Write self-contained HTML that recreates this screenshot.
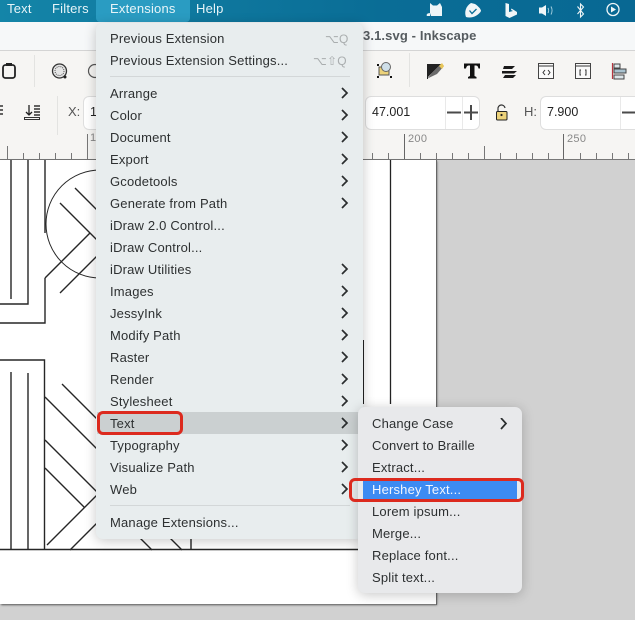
<!DOCTYPE html>
<html><head><meta charset="utf-8">
<style>
*{box-sizing:border-box}
html,body{margin:0;padding:0}
body{width:635px;height:620px;overflow:hidden;position:relative;font-family:"Liberation Sans",sans-serif;background:#d1d1d1}
.a{position:absolute}
#bar{left:0;top:0;width:635px;height:22px;background:linear-gradient(90deg,#1485a8,#0a6d96 60%,#086893)}
.mt{position:absolute;top:0;color:#e6f4f8;font-size:13px;line-height:17px;letter-spacing:.2px;white-space:nowrap}
#title{left:0;top:22px;width:635px;height:29px;background:#f6f8f9;border-bottom:1px solid #d4d4d4}
#tool{left:0;top:51px;width:635px;height:109px;background:#f6f5f3}
#ruler{left:0;top:133px;width:635px;height:27px;background:#f6f5f3;border-bottom:1px solid #777}
#canvas{left:0;top:160px;width:436px;height:444px;background:#fff;box-shadow:1px 1px 2px #555}
.menu{position:absolute;background:#e8edee;border-radius:7px;box-shadow:0 2px 12px rgba(0,0,0,.22)}
.it{position:absolute;color:#2d3031;font-size:13px;line-height:16px;letter-spacing:.18px;white-space:nowrap;margin-top:1px}
.sep{position:absolute;height:1px;background:#d3d7d8}
.box{position:absolute;background:#fff;border:1px solid #dedede;border-radius:6px;height:34px;top:96px;font-size:12.500px;color:#222;line-height:31px;padding-left:6px}
</style></head><body>
<div class="a" id="bar"></div>
<div class="a" style="left:96px;top:0;width:94px;height:22px;background:#2a9cc2;border-radius:0 0 4px 4px"></div>
<div class="mt" style="left:7px">Text</div>
<div class="mt" style="left:52px">Filters</div>
<div class="mt" style="left:110px">Extensions</div>
<div class="mt" style="left:196px">Help</div>
<svg class="a" style="left:420px;top:0" width="215" height="22" viewBox="0 0 215 22">
<path d="M10 16V3l3 2.500h4L20 3l2 4V16ZM10 13c-3 0-4 2-3 3h4Z" fill="#eef5f7"/>
<path d="M46 17c-2-5 0-11 5-14l4 1c3 2 6 5 6 7-2 4-9 8-15 6Z" fill="#f1f6f8"/><path d="M49.500 10.500l2.500 3 4.500-4.500" stroke="#0a6d96" stroke-width="1.300" fill="none"/>
<path d="M85.500 3l3.500 1v8l4-1-2-1 .5-1.500L97 12v2.500l-7.500 3.500-4-2Z" fill="#f1f6f8"/>
<path d="M119 7.500h3l4-2.500v11l-4-2.500h-3Z" fill="#f1f6f8"/><path d="M128 8c1 2 1 3 0 5M131 6.500c1.500 3 1.500 5 0 8" stroke="#a5d0df" fill="none"/>
<path d="M157.500 6.500l6 7.500-3 3V4l3 3-6 7" stroke="#eef5f7" stroke-width="1.100" fill="none"/>
<circle cx="193" cy="9.500" r="6" fill="none" stroke="#eef5f7" stroke-width="1.300"/><path d="M191 6.500l5 3-5 3Z" fill="#eef5f7"/>
</svg>

<div class="a" id="title"></div>
<div class="a" style="left:363px;top:28px;font-size:13px;font-weight:700;color:#555b5f;line-height:16px;letter-spacing:.12px">3.1.svg - Inkscape</div>

<div class="a" id="tool"></div>
<div class="a" id="ruler"></div>
<svg class="a" style="left:0;top:51px" width="635" height="109" viewBox="0 51 635 109">
<path d="M34.500 55V87M57.500 96V135" stroke="#e3e3e1" fill="none"/>
<path d="M409.500 53V87" stroke="#e3e3e1" fill="none"/>
<rect x="3" y="65" width="12" height="13" rx="2.500" fill="none" stroke="#222" stroke-width="1.800"/><rect x="6" y="63" width="6" height="3" fill="#222"/>
<circle cx="59.500" cy="71" r="7" fill="#e6e6e6" stroke="#333" stroke-width="1.300"/><circle cx="59.500" cy="71" r="4.500" fill="none" stroke="#555" stroke-dasharray="1 1"/><circle cx="65" cy="77" r="1.500" fill="#222"/>
<circle cx="95" cy="71" r="6.500" fill="none" stroke="#555" stroke-width="1.200"/>
<path d="M0 106h3M0 110h3M0 114h3" stroke="#333" stroke-width="1.500"/>
<path d="M29 105v10M26 112l3 3 3-3" stroke="#222" stroke-width="1.300" fill="none"/><path d="M34 106h6M34 109h6M34 112h6M34 115h6" stroke="#333" stroke-width="1.500"/><rect x="24.500" y="117.500" width="15" height="2" fill="none" stroke="#333"/>
<rect x="379" y="67" width="10" height="8" fill="#ecd27a" stroke="#555"/><circle cx="386" cy="67" r="4.500" fill="#cfdfe8" stroke="#666"/><path d="M377 64h2v2h-2ZM377 76h2v2h-2ZM390 76h2v2h-2Z" fill="#111"/>
<path d="M427 64h14L427 78Z" fill="#222"/><path d="M427.500 78.500L437 74 444 66l-3-2-9 9Z" fill="#6b6b6b"/><path d="M439 66l3-3 2 3-2 3Z" fill="#e8c659"/><path d="M427 64h1v15h-1Z" fill="#222"/>
<path d="M464 63.500h16v5h-1.500c-.5-2-1-3-3-3h-1v10.500l2 1v1.500h-8.500V77l2-1V65.500h-1c-2 0-2.500 1-3 3H464Z" fill="#111"/>
<path d="M504 66h11l-3 3h-9ZM502 71h15l-3 2.500h-12ZM505 75h11l-3 3h-10Z" fill="#1a1a1a"/>
<rect x="538.500" y="63.500" width="15" height="15" fill="#fafafa" stroke="#444"/><path d="M539 66h14" stroke="#999" stroke-width="2"/><path d="M545 70l-2 2.500 2 2.500M548 70l2 2.500-2 2.500" stroke="#333" fill="none"/>
<rect x="575.500" y="63.500" width="15" height="15" fill="#fafafa" stroke="#444"/><path d="M576 66h14" stroke="#999" stroke-width="2"/><path d="M581 70h-1v5h1M585 70h1v5h-1" stroke="#333" fill="none"/>
<path d="M612.500 63v16" stroke="#b53540" stroke-width="1.200"/><rect x="614" y="64" width="6" height="4" fill="#dde6ea" stroke="#444"/><rect x="614" y="69" width="12" height="4" fill="#a9c2cf" stroke="#444"/><rect x="614" y="75" width="10" height="4" fill="#dde6ea" stroke="#444"/>
<path d="M498 111.500v-2.500a3.500 3.500 0 0 1 7-1" stroke="#333" stroke-width="1.200" fill="none"/><rect x="496.500" y="111.500" width="10.500" height="8.500" rx="1" fill="#ecd27a" stroke="#222"/><circle cx="501.500" cy="115" r="1.100" fill="#222"/>
<path d="M7.500 159V146M23.500 159V153M39.500 159V153M55.500 159V153M71.500 159V153M87.500 134V159" stroke="#777" fill="none"/>
<path d="M372.500 159v-6M388.500 159v-6M420.500 159v-6M436.500 159v-6M452.500 159v-6M468.500 159v-6M484.500 159V146M500.500 159v-6M516.500 159v-6M532.500 159v-6M548.500 159v-6M580.500 159v-6M596.500 159v-6M612.500 159v-6M628.500 159v-6" stroke="#777" fill="none"/>
<path d="M404.500 134v25M563.500 134v25" stroke="#666" fill="none"/>
</svg>
<div class="a" style="left:68px;top:104px;font-size:13px;color:#555;line-height:16px">X:</div>
<div class="box" style="left:83px;width:60px">1</div>
<div class="a" style="left:90px;top:132px;font-size:11px;color:#888;line-height:13px">1</div>
<div class="box" style="left:365px;width:115px">47.001</div>
<svg class="a" style="left:365px;top:96px" width="115" height="33"><path d="M80.500 1V33M97.500 1V33" stroke="#e9e9e9"/><path d="M82 16.500h14M99 16.500h14M106 9v15" stroke="#4a4a4a" stroke-width="2"/></svg>
<div class="a" style="left:524px;top:104px;font-size:13px;color:#555;line-height:16px">H:</div>
<div class="box" style="left:540px;width:110px">7.900</div>
<svg class="a" style="left:540px;top:96px" width="95" height="33"><path d="M80.500 1V33" stroke="#e9e9e9"/><path d="M82 16.500h13" stroke="#4a4a4a" stroke-width="2"/></svg>
<div class="a" style="left:408px;top:133px;font-size:11px;color:#888;line-height:13px;letter-spacing:.3px">200</div>
<div class="a" style="left:567px;top:133px;font-size:11px;color:#888;line-height:13px;letter-spacing:.3px">250</div>

<div class="a" id="canvas"></div>
<svg class="a" style="left:0;top:160px" width="436" height="444" viewBox="0 160 436 444">
<g stroke="#262626" stroke-width="1.400" fill="none">
<path d="M11 160V299M28 160V304H0M45 160V233M45 278V323H0"/>
<path d="M45 278L90 233"/>
<circle cx="100" cy="224" r="54" stroke-width="1"/>
<path d="M75 188L120 233M60 203L110 253M60 293L110 243"/>
<path d="M0 360H44.500V549M11 372V549M28 373V549"/>
<path d="M62 384L110 432M45 397L110 462M45 440L110 505M45 468L84 507M47 545L110 482M70 550L110 510M140 538L152 550M170 538L182 550M191 538V550"/>
<path d="M0 549.500H363"/>
</g>
<path d="M390.500 160V404" stroke="#222" stroke-width="1.300"/>
<path d="M363.500 340V404" stroke="#222" stroke-width="1"/>
</svg>
<div class="a" style="left:436px;top:160px;width:1px;height:445px;background:#666"></div>

<div class="menu" style="left:96px;top:23px;width:267px;height:516px"></div>
<div class="a" style="left:97px;top:412px;width:266px;height:22px;background:#cbd0d1"></div>
<div class="sep" style="left:110px;top:76px;width:240px"></div>
<div class="sep" style="left:110px;top:505px;width:240px"></div>

<div class="it" style="left:110px;top:30px">Previous Extension</div>
<div class="it" style="left:110px;top:52px">Previous Extension Settings...</div>
<div class="it" style="left:325px;top:30px;color:#a9adae;font-size:12px">⌥Q</div>
<div class="it" style="left:313px;top:52px;color:#a9adae;font-size:12px">⌥⇧Q</div>
<div class="it" style="left:110px;top:85px">Arrange</div>
<div class="it" style="left:110px;top:107px">Color</div>
<div class="it" style="left:110px;top:129px">Document</div>
<div class="it" style="left:110px;top:151px">Export</div>
<div class="it" style="left:110px;top:173px">Gcodetools</div>
<div class="it" style="left:110px;top:195px">Generate from Path</div>
<div class="it" style="left:110px;top:217px">iDraw 2.0 Control...</div>
<div class="it" style="left:110px;top:239px">iDraw Control...</div>
<div class="it" style="left:110px;top:261px">iDraw Utilities</div>
<div class="it" style="left:110px;top:283px">Images</div>
<div class="it" style="left:110px;top:305px">JessyInk</div>
<div class="it" style="left:110px;top:327px">Modify Path</div>
<div class="it" style="left:110px;top:349px">Raster</div>
<div class="it" style="left:110px;top:371px">Render</div>
<div class="it" style="left:110px;top:393px">Stylesheet</div>
<div class="it" style="left:110px;top:415px">Text</div>
<div class="it" style="left:110px;top:437px">Typography</div>
<div class="it" style="left:110px;top:459px">Visualize Path</div>
<div class="it" style="left:110px;top:481px">Web</div>
<div class="it" style="left:110px;top:514px">Manage Extensions...</div>
<svg class="a" style="left:340px;top:85px" width="10" height="412" fill="none" stroke="#2a2d2e" stroke-width="1.700">
<path d="M2 3l5 5-5 5M2 25l5 5-5 5M2 47l5 5-5 5M2 69l5 5-5 5M2 91l5 5-5 5M2 113l5 5-5 5M2 179l5 5-5 5M2 201l5 5-5 5M2 223l5 5-5 5M2 245l5 5-5 5M2 267l5 5-5 5M2 289l5 5-5 5M2 311l5 5-5 5M2 333l5 5-5 5M2 355l5 5-5 5M2 377l5 5-5 5M2 399l5 5-5 5"/></svg>

<div class="menu" style="left:358px;top:407px;width:164px;height:186px;background:#e8e9eb"></div>
<div class="a" style="left:363px;top:481px;width:154px;height:18px;background:#3d8bf2"></div>
<div class="it" style="left:372px;top:415px">Change Case</div>
<div class="it" style="left:372px;top:437px">Convert to Braille</div>
<div class="it" style="left:372px;top:459px">Extract...</div>
<div class="it" style="left:372px;top:481px;color:#f2f6fd">Hershey Text...</div>
<div class="it" style="left:372px;top:503px">Lorem ipsum...</div>
<div class="it" style="left:372px;top:525px">Merge...</div>
<div class="it" style="left:372px;top:547px">Replace font...</div>
<div class="it" style="left:372px;top:569px">Split text...</div>
<svg class="a" style="left:499px;top:418px" width="10" height="14" fill="none" stroke="#2a2d2e" stroke-width="1.700"><path d="M2 0l5 5.500-5 5.500"/></svg>

<div class="a" style="left:97px;top:411px;width:86px;height:24px;border:3px solid #dc2a1e;border-radius:6px"></div>
<div class="a" style="left:349px;top:478px;width:175px;height:24px;border:3px solid #dc2a1e;border-radius:6px"></div>
</body></html>
